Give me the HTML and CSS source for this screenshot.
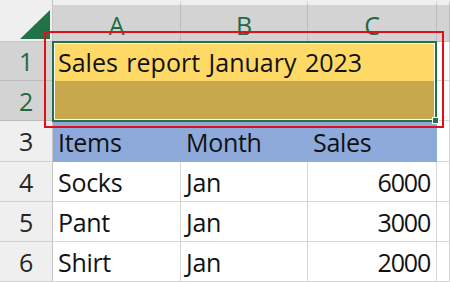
FILE: index.html
```html
<!DOCTYPE html>
<html lang="en">

<head>
    <meta charset="UTF-8">
    <title>Sales report</title>
    <link rel="stylesheet" href="styles.css">
</head>

<body>

    <div class="sheet">
        <div class="grid">
            <!-- cabeçalho das colunas -->
            <div class="corner">
                <svg class="selectall" width="31" height="30" viewBox="0 0 31 30">
                    <polygon points="0,29 30,29 30,0" fill="#217346" />
                </svg>
            </div>
            <div class="colhead sel">A</div>
            <div class="colhead sel">B</div>
            <div class="colhead sel">C</div>
            <div class="colhead">&nbsp;</div>

            <div class="rowhead sel">1</div>
            <div class="cell title">Sales report January 2023</div>
            <div class="cell"></div>

            <div class="rowhead sel">2</div>
            <div class="cell title2"></div>
            <div class="cell"></div>

            <div class="rowhead">3</div>
            <div class="cell head">Items</div>
            <div class="cell head">Month</div>
            <div class="cell head">Sales</div>
            <div class="cell"></div>

            <div class="rowhead">4</div>
            <div class="cell">Socks</div>
            <div class="cell">Jan</div>
            <div class="cell num">6000</div>
            <div class="cell"></div>

            <div class="rowhead">5</div>
            <div class="cell">Pant</div>
            <div class="cell">Jan</div>
            <div class="cell num">3000</div>
            <div class="cell"></div>

            <div class="rowhead">6</div>
            <div class="cell">Shirt</div>
            <div class="cell">Jan</div>
            <div class="cell num">2000</div>
            <div class="cell"></div>
        </div>

        <!-- seleção e destaque -->
        <div class="selection"><span class="handle"></span></div>
        <div class="highlight"></div>
    </div>

</body>

</html>
```

FILE: styles.css
```css
body {
    margin: 0;
    background-color: #ffffff;
    font-family: 'Open Sans', 'Liberation Sans', sans-serif;
}

.sheet {
    position: relative;
    width: 450px;
    height: 282px;
    overflow: hidden;
}

.grid {
    display: grid;
    grid-template-columns: 53px 128px 127px 129px 1fr;
    grid-template-rows: 42px 39px 40px 41px 40px 40px 40px;
}

.grid > div {
    box-sizing: border-box;
    display: flex;
    align-items: center;
    font-size: 25px;
    letter-spacing: -0.3px;
}

.corner {
    background-color: #efefef;
    border-right: 1px solid #c6c6c6;
    border-bottom: 1px solid #c6c6c6;
    padding: 10px 0 0 20px;
    align-items: flex-start !important;
}

.selectall {
    display: block;
}

.colhead {
    justify-content: center;
    background-color: #d3d3d3;
    border-top: 5px solid #efefef;
    border-right: 1px solid #bdbdbd;
    border-bottom: 1px solid #bdbdbd;
    color: #444444;
    padding-top: 3px;
}

.colhead:last-child {
    background-color: #efefef;
}

.colhead.sel {
    color: #1d6b40;
}

.rowhead {
    justify-content: center;
    background-color: #efefef;
    border-right: 1px solid #c6c6c6;
    border-bottom: 1px solid #d0d0d0;
    color: #262626;
}

.rowhead.sel {
    background-color: #d3d3d3;
    color: #1d6b40;
    border-bottom-color: #bdbdbd;
}

.cell {
    border-right: 1px solid #d6d6d6;
    border-bottom: 1px solid #d6d6d6;
    padding: 0 5px;
    color: #111111;
}

.title {
    grid-column: span 3;
    background-color: #ffd966;
    border: none !important;
    letter-spacing: 0 !important;
    word-spacing: 2px;
}

.title2 {
    grid-column: span 3;
    background-color: #c8a84c;
    border: none !important;
}

.head {
    background-color: #8eaadb;
    border-right: none !important;
    border-bottom: none !important;
}

.num {
    justify-content: flex-end;
    letter-spacing: -1.2px !important;
    padding-right: 6px;
}

.selection {
    position: absolute;
    left: 52px;
    top: 41px;
    width: 385px;
    height: 81px;
    box-sizing: border-box;
    border: 2px solid #217346;
    box-shadow: inset 0 0 0 1px #ffffff;
}

.handle {
    position: absolute;
    right: -4px;
    bottom: -4px;
    width: 5px;
    height: 5px;
    background-color: #217346;
    border: 1px solid #ffffff;
}

.highlight {
    position: absolute;
    left: 44px;
    top: 31px;
    width: 400px;
    height: 97px;
    box-sizing: border-box;
    border: 2px solid #e0101a;
}
```
